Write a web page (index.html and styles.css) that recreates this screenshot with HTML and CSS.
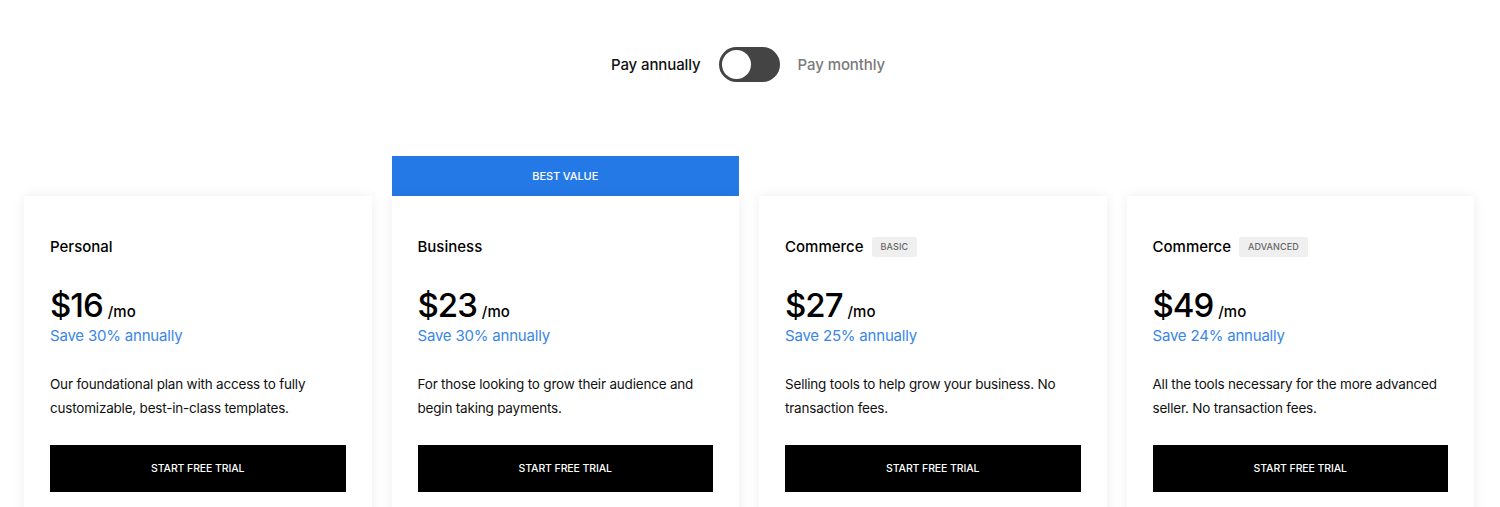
FILE: index.html
```html
<!DOCTYPE html>
<html>
<head>
<meta charset="utf-8">
<link rel="stylesheet" href="styles.css">
</head>
<body>
<div class="page">
  <div class="billing">
    <span class="bill-label active">Pay annually</span>
    <span class="switch"><span class="knob"></span></span>
    <span class="bill-label muted">Pay monthly</span>
  </div>
  <div class="plans">
    <div class="plan">
      <div class="banner-space"></div>
      <div class="card">
        <div class="title">Personal</div>
        <div class="price"><span class="amount">$16</span><span class="per">/mo</span></div>
        <div class="save">Save 30% annually</div>
        <p class="desc">Our foundational plan with access to fully customizable, best-in-class templates.</p>
        <a class="cta">START FREE TRIAL</a>
      </div>
    </div>
    <div class="plan">
      <div class="banner">BEST VALUE</div>
      <div class="card">
        <div class="title">Business</div>
        <div class="price"><span class="amount">$23</span><span class="per">/mo</span></div>
        <div class="save">Save 30% annually</div>
        <p class="desc">For those looking to grow their audience and begin taking payments.</p>
        <a class="cta">START FREE TRIAL</a>
      </div>
    </div>
    <div class="plan">
      <div class="banner-space"></div>
      <div class="card">
        <div class="title">Commerce <span class="tag">BASIC</span></div>
        <div class="price"><span class="amount">$27</span><span class="per">/mo</span></div>
        <div class="save">Save 25% annually</div>
        <p class="desc">Selling tools to help grow your business. No transaction fees.</p>
        <a class="cta">START FREE TRIAL</a>
      </div>
    </div>
    <div class="plan">
      <div class="banner-space"></div>
      <div class="card">
        <div class="title">Commerce <span class="tag">ADVANCED</span></div>
        <div class="price"><span class="amount">$49</span><span class="per">/mo</span></div>
        <div class="save">Save 24% annually</div>
        <p class="desc">All the tools necessary for the more advanced seller. No transaction fees.</p>
        <a class="cta">START FREE TRIAL</a>
      </div>
    </div>
  </div>
</div>
</body>
</html>
```
FILE: styles.css
```css
* { box-sizing: border-box; }
html, body { margin: 0; padding: 0; background: #fff; }
body {
  font-family: Inter, "Noto Sans", "Liberation Sans", sans-serif;
  color: #000;
  overflow: hidden;
}
.page { padding: 47px 26px 0 24px; }
.billing {
  display: flex;
  align-items: center;
  justify-content: center;
  gap: 18px;
  height: 35px;
  padding-right: 2px;
}
.bill-label { font-size: 15px; font-weight: 500; letter-spacing: -0.1px; }
.bill-label.active { color: #111; }
.bill-label.muted { color: #7a7a7a; }
.switch {
  width: 61px;
  height: 35px;
  border-radius: 18px;
  background: #444;
  display: flex;
  align-items: center;
  padding: 3px;
}
.knob {
  width: 29px;
  height: 29px;
  border-radius: 50%;
  background: #fff;
}
.plans {
  display: grid;
  grid-template-columns: repeat(4, 1fr);
  gap: 20px;
  margin-top: 74px;
}
.banner, .banner-space { height: 40px; }
.banner {
  background: #2479e6;
  color: #fff;
  font-size: 11px;
  font-weight: 500;
  display: flex;
  align-items: center;
  justify-content: center;
  letter-spacing: -0.1px;
}
.card {
  background: #fff;
  box-shadow: 0 0 12px rgba(0,0,0,0.07);
  padding: 41px 26px 40px 26px;
  height: 340px;
}
.title {
  font-size: 15px;
  font-weight: 500;
  line-height: 20px;
  display: flex;
  align-items: center;
  gap: 8px;
}
.tag {
  background: #efefef;
  color: #666;
  font-size: 9px;
  font-weight: 500;
  padding: 0 9px;
  height: 20px;
  line-height: 20px;
  border-radius: 2px;
  letter-spacing: 0.1px;
}
.price {
  margin-top: 28px;
  display: flex;
  align-items: baseline;
  gap: 5px;
  line-height: 40px;
  height: 40px;
}
.amount { font-size: 33px; font-weight: 500; letter-spacing: -1px; }
.per { font-size: 15px; font-weight: 500; }
.save {
  color: #3a86e8;
  font-size: 15px;
  line-height: 20px;
  margin-top: 1px;
  letter-spacing: -0.2px;
}
.desc {
  margin: 26px 0 0 0;
  font-size: 13.5px;
  line-height: 24px;
  color: #111;
  letter-spacing: -0.2px;
}
.cta {
  display: flex;
  align-items: center;
  justify-content: center;
  margin-top: 25px;
  height: 47px;
  background: #000;
  color: #fff;
  font-size: 10.5px;
  font-weight: 500;
  letter-spacing: -0.1px;
}
```
